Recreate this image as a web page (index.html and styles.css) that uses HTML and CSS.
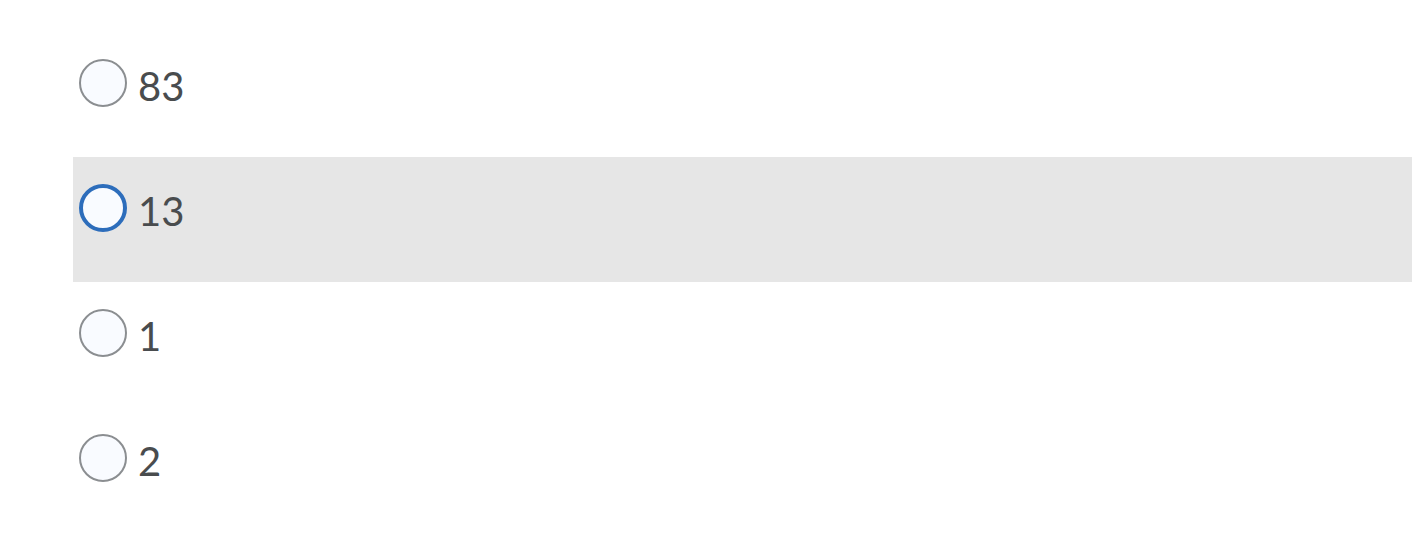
FILE: index.html
```html
<!DOCTYPE html>
<html>
<head>
<meta charset="utf-8">
<link rel="stylesheet" href="styles.css">
</head>
<body>
<div class="list">
  <label class="option"><span class="radio"></span><span class="label">83</span></label>
  <label class="option is-active"><span class="radio"></span><span class="label">13</span></label>
  <label class="option"><span class="radio"></span><span class="label">1</span></label>
  <label class="option"><span class="radio"></span><span class="label">2</span></label>
</div>
</body>
</html>
```

FILE: styles.css
```css
html, body {
  margin: 0;
  padding: 0;
  background: #ffffff;
}
body {
  font-family: Lato, "Open Sans", sans-serif;
  color: #494c4e;
}
.list {
  padding: 32px 0 0 73px;
  display: flex;
  flex-direction: column;
}
.option {
  height: 125px;
  box-sizing: border-box;
  display: flex;
  align-items: flex-start;
  padding: 27px 0 0 6px;
  gap: 11px;
}
.option.is-active {
  background: #e6e6e6;
}
.radio {
  width: 48px;
  height: 48px;
  box-sizing: border-box;
  border-radius: 50%;
  border: 2px solid #8b8e91;
  background: #f9fbff;
  flex: none;
}
.is-active .radio {
  border: 4px solid #2d6dbb;
}
.label {
  font-size: 40px;
  line-height: 48px;
  padding-top: 3px;
}
```
